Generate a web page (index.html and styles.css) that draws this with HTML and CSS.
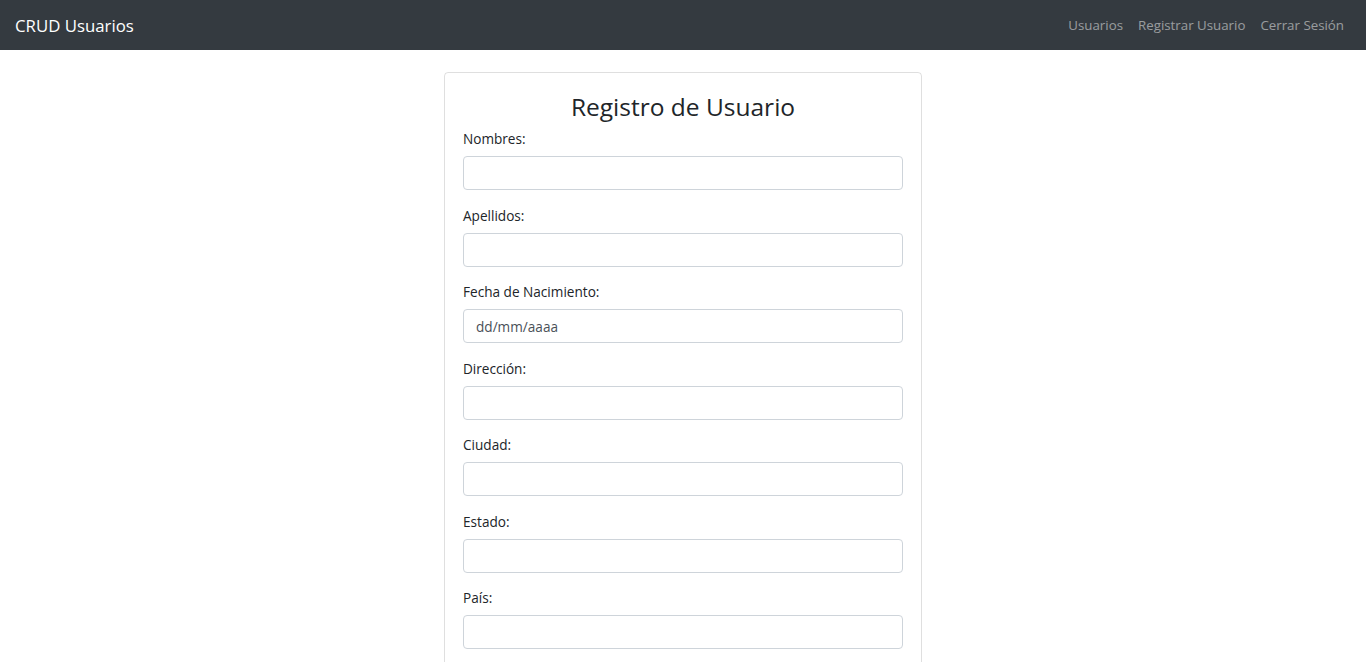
FILE: index.html
```html
<!DOCTYPE html>
<html lang="es">
<head>
  <meta charset="UTF-8" />
  <meta name="viewport" content="width=device-width, initial-scale=1.0" />
  <title>Registro de Usuario - CRUD Usuarios</title>
  <link rel="stylesheet" href="styles.css">
</head>
<body>
  <nav class="navbar">
    <a class="navbar-brand" href="#">CRUD Usuarios</a>
    <div class="navbar-nav">
      <a href="#">Usuarios</a>
      <a href="#">Registrar Usuario</a>
      <a href="#">Cerrar Sesión</a>
    </div>
  </nav>
  <main>
    <div class="card">
      <h2>Registro de Usuario</h2>
      <form id="registerForm">
        <div class="form-group">
          <label for="nombres">Nombres:</label>
          <input type="text" id="nombres" />
        </div>
        <div class="form-group">
          <label for="apellidos">Apellidos:</label>
          <input type="text" id="apellidos" />
        </div>
        <div class="form-group">
          <label for="fecha">Fecha de Nacimiento:</label>
          <input type="text" id="fecha" placeholder="dd/mm/aaaa" />
        </div>
        <div class="form-group">
          <label for="direccion">Dirección:</label>
          <input type="text" id="direccion" />
        </div>
        <div class="form-group">
          <label for="ciudad">Ciudad:</label>
          <input type="text" id="ciudad" />
        </div>
        <div class="form-group">
          <label for="estado">Estado:</label>
          <input type="text" id="estado" />
        </div>
        <div class="form-group">
          <label for="pais">País:</label>
          <input type="text" id="pais" />
        </div>
      </form>
    </div>
  </main>
</body>
</html>
```

FILE: styles.css
```css
body {
  font-family: "Open Sans", Arial, sans-serif;
  font-size: 13.6px;
  color: #212529;
  background-color: #fff;
  margin: 0;
}
a {
  text-decoration: none;
}
.navbar {
  height: 50px;
  background-color: #343a40;
  display: flex;
  align-items: center;
  justify-content: space-between;
  padding: 0 22px 0 15px;
}
.navbar-brand {
  color: #fff;
  font-size: 16.8px;
}
.navbar-nav {
  display: flex;
  gap: 15px;
}
.navbar-nav a {
  color: rgba(255, 255, 255, 0.5);
  font-size: 13.3px;
}
main {
  padding-top: 22px;
}
.card {
  width: 478px;
  box-sizing: border-box;
  margin: 0 auto;
  padding: 18px 18px 20px;
  border: 1px solid rgba(0, 0, 0, 0.125);
  border-radius: 4px;
}
.card h2 {
  font-size: 24.5px;
  font-weight: 500;
  text-align: center;
  margin: 0 0 5px;
  line-height: 32px;
}
.form-group {
  margin-bottom: 14.5px;
}
.form-group label {
  display: block;
  line-height: 21px;
  margin-bottom: 7px;
}
.form-group input {
  display: block;
  width: 100%;
  box-sizing: border-box;
  height: 34px;
  padding: 6px 12px;
  font-family: inherit;
  font-size: 13.6px;
  color: #495057;
  border: 1px solid #ced4da;
  border-radius: 4px;
}
.form-group input::placeholder {
  color: #495057;
}
```
